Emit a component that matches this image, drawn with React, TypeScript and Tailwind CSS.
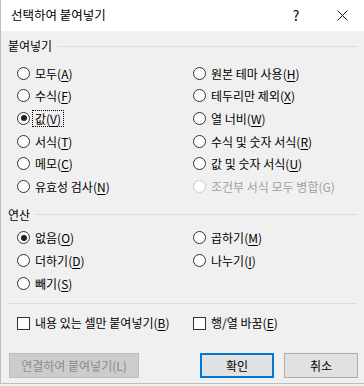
import React from "react";

const FONT = { fontFamily: '"Noto Sans CJK KR", "Noto Sans", sans-serif' };

function Mn({ text, k }: { text: string; k: string }) {
  return (
    <span>
      {text}(<span className="underline underline-offset-[2px]">{k}</span>)
    </span>
  );
}

function Radio({
  label,
  k,
  checked,
  disabled,
  focus,
}: {
  label: string;
  k: string;
  checked?: boolean;
  disabled?: boolean;
  focus?: boolean;
}) {
  return (
    <div className="flex items-center h-full">
      <span
        className={`w-[13px] h-[13px] rounded-full border bg-white flex items-center justify-center shrink-0 ${
          disabled ? "border-[#cccccc]" : "border-[#333333]"
        }`}
      >
        {checked && <span className="w-[6px] h-[6px] rounded-full bg-[#222222]" />}
      </span>
      <span
        className={`ml-[3px] px-[2px] leading-[15px] ${
          focus ? "outline outline-1 outline-dotted outline-black" : ""
        } ${disabled ? "text-[#a0a0a0]" : "text-black"}`}
      >
        {disabled ? `${label}(${k})` : <Mn text={label} k={k} />}
      </span>
    </div>
  );
}

function Check({ label, k }: { label: string; k: string }) {
  return (
    <div className="flex items-center">
      <span className="w-[13px] h-[13px] border border-[#333333] bg-white shrink-0" />
      <span className="ml-[5px] text-black">
        <Mn text={label} k={k} />
      </span>
    </div>
  );
}

function GroupLabel({ text }: { text: string }) {
  return (
    <div className="flex items-center h-[16px] pl-[7px] pr-[6px]">
      <span className="text-black leading-[16px]">{text}</span>
      <span className="flex-1 h-px bg-[#dcdcdc] ml-[5px]" />
    </div>
  );
}

export default function App() {
  return (
    <div className="w-[364px] h-[386px] bg-[#f0f0f0] text-[12px]" style={FONT}>
      <div className="w-[364px] h-[384px] flex flex-col border-l border-b border-[#bdbdbd] bg-[#f0f0f0]">
        {/* Title bar */}
        <div className="h-[31px] bg-white flex items-center shrink-0">
          <span className="pl-[10px] text-[12.5px] text-black flex-1">선택하여 붙여넣기</span>
          <span className="w-[20px] text-center text-[14px] text-black mr-[31px]">?</span>
          <svg width="11" height="11" viewBox="0 0 11 11" className="mr-[16px]">
            <path d="M0.5 0.5 L10.5 10.5 M10.5 0.5 L0.5 10.5" stroke="#111" strokeWidth="1" />
          </svg>
        </div>

        {/* Body */}
        <div className="flex flex-col">
          <div className="mt-[7px]">
            <GroupLabel text="붙여넣기" />
          </div>
          <div className="grid grid-cols-[176px_1fr] auto-rows-[22.6px] pl-[16px] mt-[8px]">
            <Radio label="모두" k="A" />
            <Radio label="원본 테마 사용" k="H" />
            <Radio label="수식" k="F" />
            <Radio label="테두리만 제외" k="X" />
            <Radio label="값" k="V" checked focus />
            <Radio label="열 너비" k="W" />
            <Radio label="서식" k="T" />
            <Radio label="수식 및 숫자 서식" k="R" />
            <Radio label="메모" k="C" />
            <Radio label="값 및 숫자 서식" k="U" />
            <Radio label="유효성 검사" k="N" />
            <Radio label="조건부 서식 모두 병합" k="G" disabled />
          </div>

          <div className="mt-[9px]">
            <GroupLabel text="연산" />
          </div>
          <div className="grid grid-cols-[176px_1fr] auto-rows-[22.6px] pl-[16px] mt-[4px]">
            <Radio label="없음" k="O" checked />
            <Radio label="곱하기" k="M" />
            <Radio label="더하기" k="D" />
            <Radio label="나누기" k="I" />
            <Radio label="빼기" k="S" />
          </div>

          <div className="mx-[7px] mt-[9px] h-px bg-[#dcdcdc]" />

          <div className="flex items-center pl-[16px] mt-[12px] h-[14px]">
            <div className="w-[176px]">
              <Check label="내용 있는 셀만 붙여넣기" k="B" />
            </div>
            <Check label="행/열 바꿈" k="E" />
          </div>

          <div className="flex items-center mt-[23px] pl-[8px] pr-[6px]">
            <div className="w-[130px] h-[25px] border border-[#bfbfbf] bg-[#cccccc] flex items-center justify-center text-[#8a8a8a]">
              연결하여 붙여넣기(L)
            </div>
            <div className="flex-1" />
            <div className="w-[74px] h-[25px] border-2 border-[#0078d7] bg-[#e1e1e1] flex items-center justify-center text-black">
              확인
            </div>
            <div className="w-[74px] h-[25px] ml-[10px] border border-[#adadad] bg-[#e1e1e1] flex items-center justify-center text-black">
              취소
            </div>
          </div>
        </div>
      </div>
    </div>
  );
}
